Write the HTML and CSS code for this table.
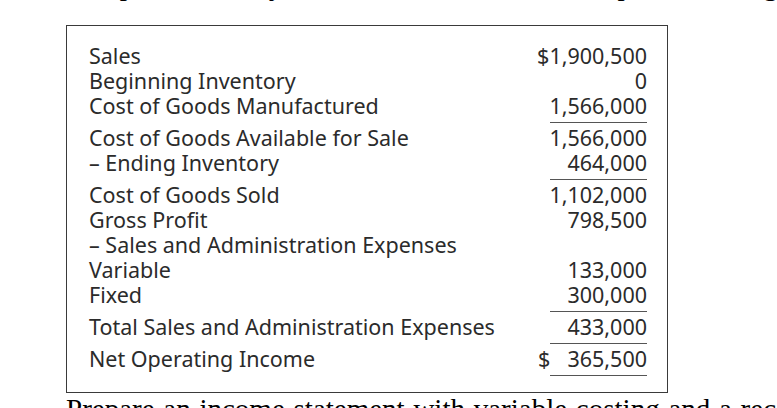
FILE: index.html
```html
<!DOCTYPE html>
<html lang="en">
<head>
<meta charset="utf-8">
<title>Income Statement</title>
<link rel="stylesheet" href="styles.css">
</head>
<body>
<div class="page">
  <p class="prose prose-top">The production by month, total cost, and each product using</p>
  <div class="statement">
    <div class="row"><span class="label">Sales</span><span class="cur"></span><span class="num">$1,900,500</span></div>
    <div class="row"><span class="label">Beginning Inventory</span><span class="cur"></span><span class="num">0</span></div>
    <div class="row ruled"><span class="label">Cost of Goods Manufactured</span><span class="cur"></span><span class="num">1,566,000</span></div>
    <div class="row"><span class="label">Cost of Goods Available for Sale</span><span class="cur"></span><span class="num">1,566,000</span></div>
    <div class="row ruled"><span class="label">– Ending Inventory</span><span class="cur"></span><span class="num">464,000</span></div>
    <div class="row"><span class="label">Cost of Goods Sold</span><span class="cur"></span><span class="num">1,102,000</span></div>
    <div class="row"><span class="label">Gross Profit</span><span class="cur"></span><span class="num">798,500</span></div>
    <div class="row"><span class="label">– Sales and Administration Expenses</span><span class="cur"></span><span class="num"></span></div>
    <div class="row"><span class="label">Variable</span><span class="cur"></span><span class="num">133,000</span></div>
    <div class="row ruled"><span class="label">Fixed</span><span class="cur"></span><span class="num">300,000</span></div>
    <div class="row ruled"><span class="label">Total Sales and Administration Expenses</span><span class="cur"></span><span class="num">433,000</span></div>
    <div class="row ruled last"><span class="label">Net Operating Income</span><span class="cur">$</span><span class="num">365,500</span></div>
  </div>
  <p class="prose">Prepare an income statement with variable costing and a reconciliation</p>
</div>
</body>
</html>
```
FILE: styles.css
```css
html, body {
  margin: 0;
  padding: 0;
  background: #ffffff;
  overflow: hidden;
}

.page {
  padding-left: 66px;
  width: 777px;
  box-sizing: border-box;
}

.prose {
  margin: 0;
  font-family: "Liberation Serif", "Times New Roman", serif;
  font-size: 29px;
  line-height: 33px;
  color: #000;
  white-space: nowrap;
  word-spacing: 1.5px;
}

.prose-top {
  margin-top: -31px;
  margin-bottom: 23px;
}

.statement {
  width: 602px;
  box-sizing: border-box;
  border: 1px solid #3a3a3a;
  padding: 17px 20px 16px 22px;
  font-family: "Noto Sans", "Open Sans", sans-serif;
  font-size: 21.5px;
  line-height: 25px;
  color: #2b2b2b;
}

.row {
  display: flex;
  align-items: flex-start;
}

.label {
  flex: 1;
  white-space: nowrap;
}

.cur {
  width: 12px;
  text-align: left;
}

.num {
  width: 97px;
  white-space: nowrap;
  display: flex;
  justify-content: flex-end;
  min-height: 25px;
}

.row.ruled {
  margin-bottom: 2px;
}

.row.ruled .num {
  padding-bottom: 4px;
  border-bottom: 1px solid #555;
}

.row.last {
  margin-bottom: 0;
}
```
